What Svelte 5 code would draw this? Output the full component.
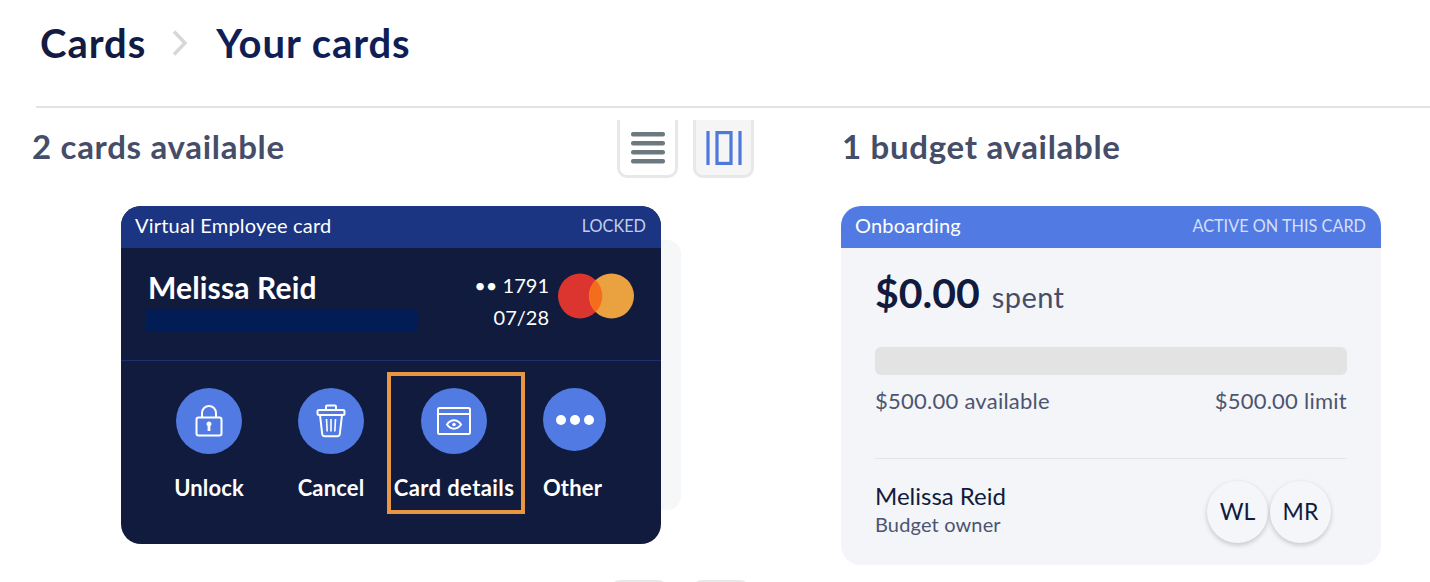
<script>
	const actions = [
		{ label: 'Unlock', icon: 'lock' },
		{ label: 'Cancel', icon: 'trash' },
		{ label: 'Card details', icon: 'card', highlight: true },
		{ label: 'Other', icon: 'dots' }
	];
</script>

<div class="page">
	<header class="crumbs">
		<span class="crumb-root">Cards</span>
		<svg class="chevron" width="18" height="28" viewBox="0 0 18 28" fill="none">
			<path d="M3 2.5 14 14 3 25.5" stroke="#d6d7d9" stroke-width="3.4" />
		</svg>
		<span class="crumb-current">Your cards</span>
	</header>
	<div class="rule"></div>

	<div class="columns">
		<section class="left">
			<div class="section-head">
				<h2>2 cards available</h2>
				<div class="toggles">
					<button class="toggle">
						<svg width="36" height="34" viewBox="0 0 36 34">
							<g fill="#6c7a80">
								<rect x="1" y="1" width="34" height="4.4" rx="2" />
								<rect x="1" y="10" width="34" height="4.4" rx="2" />
								<rect x="1" y="19" width="34" height="4.4" rx="2" />
								<rect x="1" y="28" width="34" height="4.4" rx="2" />
							</g>
						</svg>
					</button>
					<button class="toggle active">
						<svg width="36" height="34" viewBox="0 0 36 34" fill="none" stroke="#4f78dc" stroke-width="3.2">
							<path d="M2 0.5V33.5M34 0.5V33.5" stroke-linecap="round" />
							<rect x="11" y="1.6" width="14" height="30.8" />
						</svg>
					</button>
				</div>
			</div>

			<div class="card-stack">
				<div class="ghost-card"></div>
				<div class="card">
					<div class="card-top">
						<span class="top-title">Virtual Employee card</span>
						<span class="status">LOCKED</span>
					</div>
					<div class="card-info">
						<div class="holder">
							<div class="holder-name">Melissa Reid</div>
							<div class="redacted"></div>
						</div>
						<div class="numbers">
							<div><span class="bullets">••</span> 1791</div>
							<div>07/28</div>
						</div>
						<svg class="mc" width="76" height="46" viewBox="0 0 76 46">
							<ellipse cx="22" cy="23" rx="22" ry="22.5" fill="#dc3530" />
							<ellipse cx="53.5" cy="23" rx="22.5" ry="22.5" fill="#e9a23f" />
							<path d="M37.6 7a22.5 22.5 0 0 1 0 32 22.3 22.3 0 0 1 0-32Z" fill="#f46d1c" />
						</svg>
					</div>
					<div class="actions">
						{#each actions as action}
							<div class="action" class:highlight={action.highlight}>
								<div class="circle" class:small={action.icon === 'dots'}>
									{#if action.icon === 'lock'}
										<svg width="28" height="32" viewBox="0 0 28 32" fill="none" stroke="#fff" stroke-width="2">
											<rect x="1.5" y="12.5" width="25" height="18" rx="2" />
											<path d="M7 12.5V8a7 7 0 0 1 14 0v4.5" />
											<path d="M14 16.5a2.5 2.5 0 0 1 1.4 4.6V26h-2.8v-4.900A2.5 2.5 0 0 1 14 16.5Z" fill="#fff" stroke="none" />
										</svg>
									{:else if action.icon === 'trash'}
										<svg width="30" height="34" viewBox="0 0 30 34" fill="none" stroke="#fff" stroke-width="2">
											<path d="M10 6V2.5a1 1 0 0 1 1-1h8a1 1 0 0 1 1 1V6" />
											<rect x="1.5" y="6" width="27" height="5" rx="1.5" />
											<path d="M4 11l2.2 19a2.5 2.5 0 0 0 2.5 2.2h12.6a2.5 2.5 0 0 0 2.5-2.2L26 11" />
											<path d="M10.5 15l.7 12.5M15 15v12.5M19.5 15l-.7 12.5" stroke-width="1.6" />
										</svg>
									{:else if action.icon === 'card'}
										<svg width="34" height="28" viewBox="0 0 34 28" fill="none" stroke="#fff" stroke-width="2">
											<rect x="1" y="1" width="32" height="26" rx="1.5" />
											<path d="M1 7h32" />
											<path d="M10 17.5c3.8-5.6 10.2-5.6 14 0-3.8 5.6-10.2 5.6-14 0Z" />
											<circle cx="17" cy="17.5" r="1.8" fill="#fff" stroke="none" />
										</svg>
									{:else}
										<span class="dot"></span><span class="dot"></span><span class="dot"></span>
									{/if}
								</div>
								<div class="action-label">{action.label}</div>
							</div>
						{/each}
					</div>
				</div>
			</div>

			<div class="toggles lower">
				<button class="toggle"></button>
				<button class="toggle"></button>
			</div>
		</section>

		<section class="right">
			<h2>1 budget available</h2>
			<div class="budget">
				<div class="budget-top">
					<span class="top-title">Onboarding</span>
					<span class="status">ACTIVE ON THIS CARD</span>
				</div>
				<div class="budget-body">
					<div class="spent"><strong>$0.00</strong> <span>spent</span></div>
					<div class="bar"></div>
					<div class="limits">
						<span>$500.00 available</span>
						<span>$500.00 limit</span>
					</div>
					<div class="owner-row">
						<div>
							<div class="owner-name">Melissa Reid</div>
							<div class="owner-role">Budget owner</div>
						</div>
						<div class="avatars">
							<div class="avatar">WL</div>
							<div class="avatar">MR</div>
						</div>
					</div>
				</div>
			</div>
		</section>
	</div>
</div>

<style>
	:global(body) {
		background: #fff;
		font-family: 'Lato', 'Open Sans', sans-serif;
	}
	.page {
		height: 582px;
		overflow: hidden;
	}
	.crumbs {
		display: flex;
		align-items: center;
		height: 85px;
		padding-left: 40px;
		font-size: 40px;
		font-weight: 700;
		letter-spacing: 0.95px;
	}
	.crumb-root {
		color: #121b42;
	}
	.crumb-current {
		color: #0f1f56;
	}
	.chevron {
		margin: 0 27px 0 25px;
	}
	.rule {
		height: 2px;
		margin: 21px 0 0 36px;
		background: #e3e3e3;
	}
	.columns {
		display: flex;
	}
	.left {
		width: 722px;
		margin-left: 32px;
	}
	.right {
		width: 540px;
		margin-left: 87px;
	}
	h2 {
		margin: 0;
		font-size: 33px;
		font-weight: 700;
		letter-spacing: 0.7px;
		color: #454d68;
		line-height: 40px;
	}
	.section-head {
		display: flex;
		justify-content: space-between;
		align-items: flex-start;
		height: 98px;
	}
	.section-head h2 {
		padding-top: 18px;
	}
	.right h2 {
		height: 80px;
		padding-left: 1px;
		box-sizing: border-box;
		margin-top: 18px;
	}
	.toggles {
		display: flex;
		gap: 15px;
		margin-top: 12px;
		height: 58px;
		overflow: hidden;
	}
	.toggle {
		display: flex;
		align-items: center;
		justify-content: center;
		box-sizing: border-box;
		width: 61px;
		height: 70px;
		margin-top: -12px;
		padding: 9px 0 0;
		background: #fff;
		border: 3px solid #e8e8e8;
		border-radius: 10px;
	}
	.toggle.active {
		background: #f5f5f5;
	}
	.lower {
		margin: 36px 0 0 578px;
		gap: 24px;
	}
	.lower .toggle {
		width: 58px;
		margin-top: 0;
	}
	.card-stack {
		position: relative;
		width: 540px;
		margin-left: 89px;
	}
	.ghost-card {
		position: absolute;
		top: 34px;
		right: -20px;
		width: 200px;
		height: 270px;
		background: #f6f7f9;
		border-radius: 14px;
	}
	.card {
		position: relative;
		height: 338px;
		border-radius: 20px;
		overflow: hidden;
		background: #111b3d;
		color: #fff;
	}
	.card-top,
	.budget-top {
		display: flex;
		justify-content: space-between;
		align-items: center;
		height: 42px;
		padding: 0 15px 0 14px;
		font-size: 20px;
		color: #fff;
	}
	.top-title {
		margin-top: -4px;
		letter-spacing: 0.2px;
	}
	.card-top {
		background: #1c3582;
	}
	.budget-top {
		background: #517ae3;
	}
	.status {
		font-size: 16.3px;
		color: #c3cde8;
		margin-top: -4px;
	}
	.budget-top .status {
		color: #d5dff7;
	}
	.card-info {
		display: flex;
		align-items: flex-start;
		height: 112px;
		padding: 0 27px 0 27px;
		border-bottom: 1px solid #1f2f6b;
	}
	.holder {
		flex: 1;
		padding-top: 20px;
	}
	.holder-name {
		font-size: 30px;
		font-weight: 700;
		letter-spacing: 0.15px;
		line-height: 38px;
	}
	.redacted {
		width: 272px;
		height: 23px;
		margin: 3px 0 0 -2px;
		background: #021c55;
	}
	.numbers {
		margin-top: 21px;
		font-size: 20px;
		line-height: 32px;
		text-align: right;
	}
	.mc {
		margin: 25px 0 0 9px;
	}
	.actions {
		display: grid;
		grid-template-columns: 124px 120px 126px 115px;
		padding: 27px 0 0 26px;
	}
	.action {
		position: relative;
		display: flex;
		flex-direction: column;
		align-items: center;
	}
	.action.highlight::after {
		content: '';
		position: absolute;
		top: -16px;
		left: -4px;
		width: 130px;
		height: 134px;
		border: 4px solid #e8963f;
	}
	.action:last-child .action-label {
		margin-right: 4px;
	}
	.circle {
		display: flex;
		align-items: center;
		justify-content: center;
		gap: 4px;
		width: 66px;
		height: 66px;
		border-radius: 50%;
		background: #517ae3;
	}
	.circle.small {
		width: 63px;
		height: 63px;
		margin-bottom: 3px;
	}
	.dot {
		width: 10px;
		height: 10px;
		border-radius: 50%;
		background: #fff;
	}
	.action-label {
		margin-top: 20px;
		font-size: 22px;
		font-weight: 700;
		letter-spacing: 0.15px;
		line-height: 28px;
		white-space: nowrap;
	}
	.highlight .action-label {
		letter-spacing: 0.4px;
	}
	.budget {
		height: 359px;
		border-radius: 20px;
		overflow: hidden;
		background: #f4f5f8;
	}
	.budget-body {
		padding: 0 34px;
	}
	.spent {
		display: flex;
		align-items: baseline;
		gap: 12px;
		height: 99px;
		padding-top: 20px;
		box-sizing: border-box;
		font-size: 29px;
		letter-spacing: 0.4px;
		color: #454d68;
	}
	.spent strong {
		font-size: 41px;
		letter-spacing: 0;
		color: #111b3d;
	}
	.bar {
		height: 28px;
		border-radius: 6px;
		background: #e3e3e3;
	}
	.limits {
		display: flex;
		justify-content: space-between;
		height: 84px;
		padding-top: 12px;
		box-sizing: border-box;
		font-size: 22px;
		letter-spacing: 0.25px;
		color: #4c5470;
		border-bottom: 1px solid #e3e4e8;
	}
	.owner-row {
		display: flex;
		justify-content: space-between;
		padding-top: 21px;
	}
	.owner-name {
		font-size: 24px;
		line-height: 31px;
		color: #111b3d;
	}
	.owner-role {
		font-size: 20px;
		letter-spacing: 0.15px;
		line-height: 26px;
		color: #4c5470;
	}
	.avatars {
		display: flex;
		gap: 2px;
		margin: 1px 16px 0 0;
	}
	.avatar {
		display: flex;
		align-items: center;
		justify-content: center;
		box-sizing: border-box;
		width: 61px;
		height: 62px;
		padding-bottom: 3px;
		border-radius: 50%;
		background: #f5f6f9;
		box-shadow: 0 2px 5px rgba(0, 0, 0, 0.2);
		font-size: 23px;
		color: #111b3d;
	}
</style>
